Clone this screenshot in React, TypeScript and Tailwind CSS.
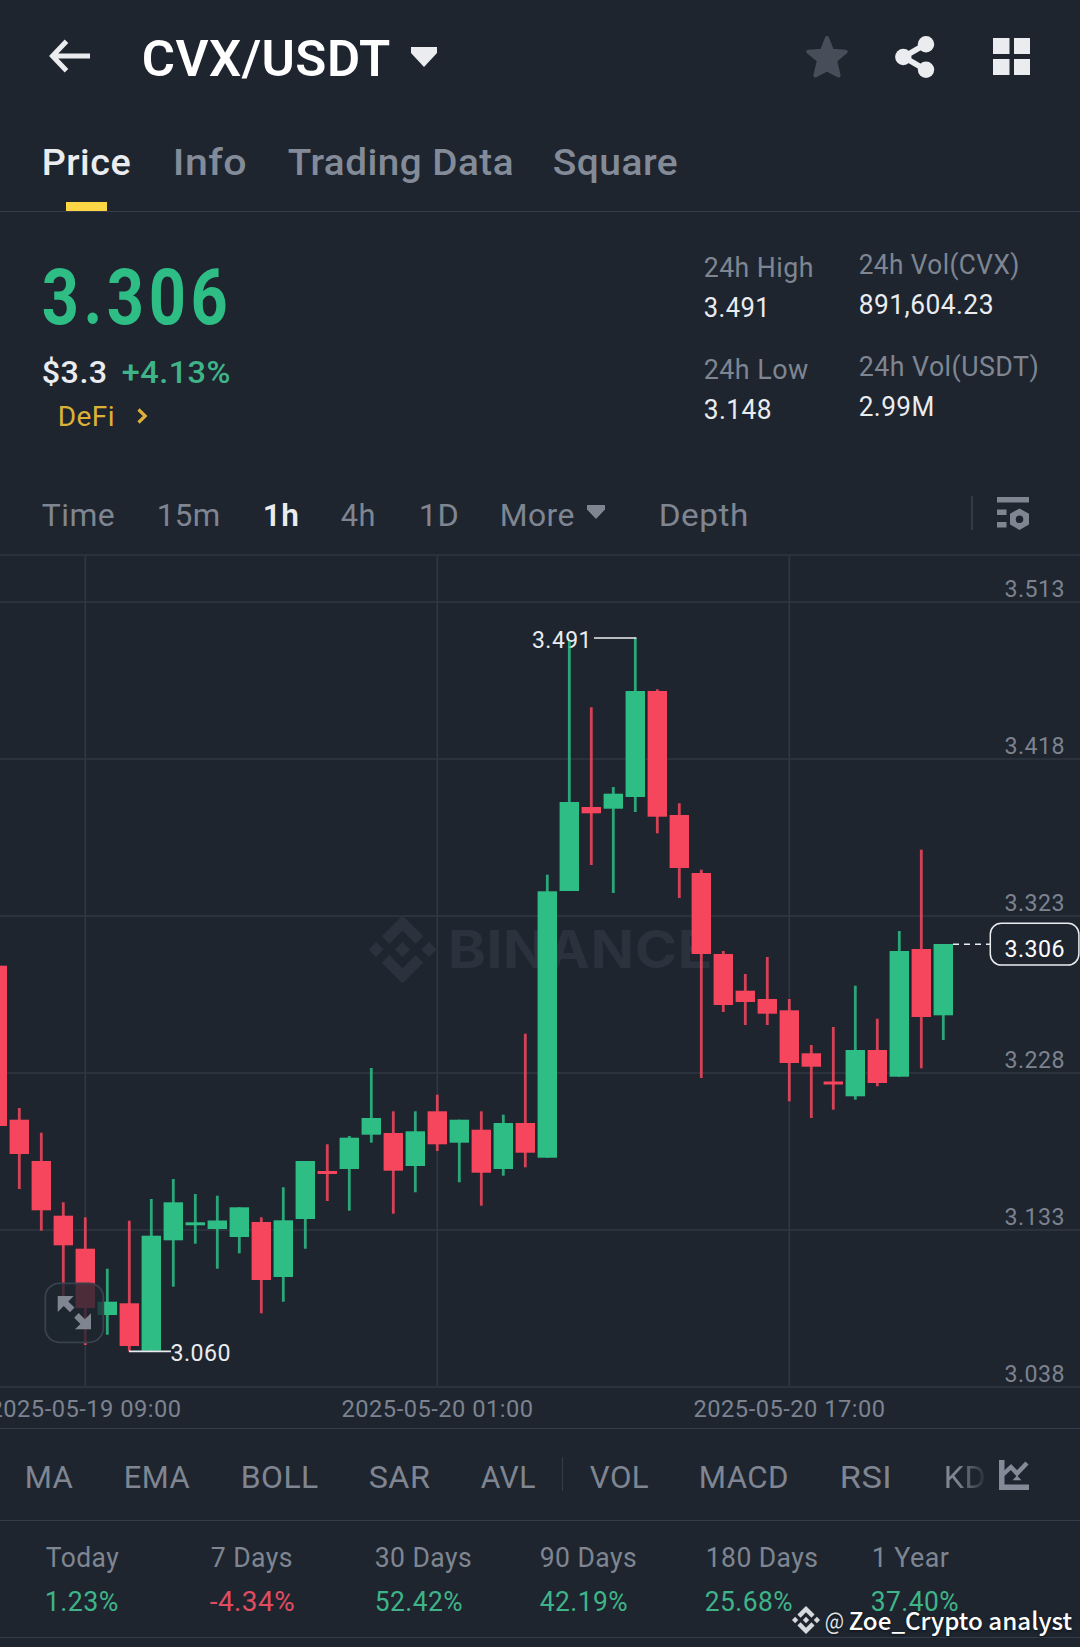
import { useLayoutEffect, useRef, type ReactNode } from "react";

/* Text whose glyphs are condensed or widened to fill the width of its box. */
function Fit({ className = "", children }: { className?: string; children: ReactNode }) {
  const box = useRef<HTMLDivElement>(null);
  const text = useRef<HTMLSpanElement>(null);
  useLayoutEffect(() => {
    if (box.current && text.current) {
      const ratio = (box.current.clientWidth - 1.4) / text.current.offsetWidth;
      text.current.style.transform = `translateX(0.7px) scaleX(${ratio})`;
    }
  });
  return (
    <div ref={box} className={`flex shrink-0 items-center whitespace-nowrap ${className}`}>
      <span ref={text} className="inline-block shrink-0 origin-left">
        {children}
      </span>
    </div>
  );
}

type Candle = [up: 0 | 1, high: number, top: number, bottom: number, low: number];

const candles: Candle[] = [
  [0, 965.7, 965.7, 1126, 1126],
  [0, 1108, 1119.7, 1154, 1189],
  [0, 1132.7, 1161, 1210.3, 1230.7],
  [0, 1202.3, 1215.7, 1245.3, 1296],
  [0, 1217.3, 1248.7, 1308, 1345],
  [1, 1268.7, 1301.7, 1315, 1334.7],
  [0, 1220.7, 1303.3, 1346, 1351.3],
  [1, 1199, 1235.7, 1350.7, 1350.7],
  [1, 1179, 1202.3, 1240.3, 1286.7],
  [1, 1194, 1222.3, 1225.3, 1243.7],
  [1, 1195.7, 1220.5, 1229, 1268.7],
  [1, 1207.3, 1207.3, 1237, 1253.3],
  [0, 1217.3, 1222, 1280, 1313.3],
  [1, 1187.3, 1220.3, 1277, 1301.7],
  [1, 1161, 1161, 1219, 1248.7],
  [0, 1144.3, 1171, 1174, 1201],
  [1, 1136, 1137.7, 1169, 1210.7],
  [1, 1068, 1118, 1134.7, 1142.7],
  [0, 1111.3, 1133, 1170.7, 1213.7],
  [1, 1111.3, 1131.3, 1166, 1192.3],
  [0, 1094.7, 1111.3, 1144.3, 1151],
  [1, 1119.7, 1119.7, 1142.7, 1182.3],
  [0, 1111.3, 1129.7, 1172.7, 1205.7],
  [1, 1114.7, 1123, 1169, 1175.7],
  [0, 1033.7, 1123, 1152.7, 1167.3],
  [1, 874.7, 891.3, 1157.7, 1157.7],
  [1, 641, 802, 891, 891],
  [0, 707.3, 807, 813.3, 865],
  [1, 787, 793.7, 808.7, 893],
  [1, 638, 691, 797, 812],
  [0, 689.3, 691, 816.7, 833.3],
  [0, 803.3, 815, 868, 898],
  [0, 869.7, 873, 954, 1078],
  [0, 951, 954, 1005, 1012],
  [0, 974, 990.7, 1002, 1025],
  [0, 957, 999, 1013.7, 1025],
  [0, 999, 1010.3, 1063, 1101.3],
  [0, 1045, 1053.3, 1066.7, 1118],
  [0, 1027, 1081.5, 1084.5, 1109.7],
  [1, 985.7, 1050, 1096.3, 1099.7],
  [0, 1018.7, 1050, 1083, 1086.3],
  [1, 931, 951, 1076.7, 1076.7],
  [0, 849.7, 949, 1017, 1068.3],
  [1, 944, 944, 1015.3, 1040],
];

const priceLevels = ["3.513", "3.418", "3.323", "3.228", "3.133", "3.038"];
const dates = ["2025-05-19 09:00", "2025-05-20 01:00", "2025-05-20 17:00"];

function BinanceMark({ className = "" }: { className?: string }) {
  return (
    <svg viewBox="0 0 68 68" className={className} fill="currentColor">
      <path d="M34 0 54.8 20.8 47.2 28.4 34 15.2 20.8 28.4 13.2 20.8Z" />
      <path d="M34 68 54.8 47.2 47.2 39.6 34 52.8 20.8 39.6 13.2 47.2Z" />
      <path d="M34 26.4 41.6 34 34 41.6 26.4 34Z" />
      <path d="M7.6 26.4 15.2 34 7.6 41.6 0 34Z" />
      <path d="M60.4 26.4 68 34 60.4 41.6 52.8 34Z" />
    </svg>
  );
}

function Chart() {
  return (
    <svg
      viewBox="0 556 1080 872"
      className="block h-[872px] w-[1080px] font-['Roboto',sans-serif] text-[24px]"
    >
      <g stroke="#303742" strokeWidth="1.6">
        {priceLevels.map((p, i) => (
          <line key={p} x1="0" x2="1080" y1={602 + i * 157} y2={602 + i * 157} />
        ))}
        {dates.map((d, i) => (
          <line key={d} x1={85.3 + i * 352} x2={85.3 + i * 352} y1="556" y2="1387" />
        ))}
      </g>
      <svg x="368.5" y="915" width="68" height="69" viewBox="0 0 68 68" className="text-[#2b323d]">
        <BinanceMark />
      </svg>
      <text
        x="448"
        y="968"
        textLength="265"
        lengthAdjust="spacingAndGlyphs"
        fill="#2b323d"
        className="font-['Inter',sans-serif] text-[52px] font-bold"
      >
        BINANCE
      </text>
      <g fill="#eaecef">
        <text x="532" y="647.7" textLength="60" lengthAdjust="spacingAndGlyphs">3.491</text>
        <text x="170.5" y="1360.7" textLength="60.5" lengthAdjust="spacingAndGlyphs">3.060</text>
      </g>
      {candles.map(([up, high, top, bottom, low], i) => {
        const x = -2.7 + i * 22;
        return (
          <g key={i} fill={up ? "#2ebd85" : "#f6465d"}>
            <rect x={x - 1.4} y={high} width="2.8" height={low - high} opacity="0.85" />
            <rect x={x - 9.7} y={top} width="19.4" height={bottom - top} />
          </g>
        );
      })}
      <path d="M594 638h42.5M129 1351.4h42" stroke="#eaecef" strokeWidth="1.6" />
      <path d="M953 944.2h37" stroke="#eaecef" strokeWidth="1.6" strokeDasharray="6 5" />
      <g fill="#7c838f">
        {priceLevels.map((p, i) => (
          <text key={p} x="1004.5" y={596.7 + i * 157} textLength="60.5" lengthAdjust="spacingAndGlyphs">
            {p}
          </text>
        ))}
        {dates.map((d, i) => (
          <text key={d} x={-10.5 + i * 352} y="1416.7" textLength="192" lengthAdjust="spacingAndGlyphs">
            {d}
          </text>
        ))}
      </g>
      <rect x="990.3" y="923.3" width="88.6" height="41.8" rx="11" fill="#1e252f" stroke="#eaecef" strokeWidth="1.5" />
      <text x="1004.5" y="956.7" textLength="60.5" lengthAdjust="spacingAndGlyphs" fill="#ffffff">
        3.306
      </text>
      <rect x="45.3" y="1283.3" width="58" height="59" rx="14" fill="#1e252f" fillOpacity="0.78" stroke="#39414c" strokeWidth="1.8" />
      <g fill="#7f8691">
        <path d="M57.7 1296H73.7L68.3 1301.4 74.5 1307.6 70 1312.2 63.8 1306 57.7 1312Z" />
        <path d="M91 1329.3H75L80.4 1323.9 74.2 1317.7 78.7 1313.1 84.9 1319.3 91 1313.2Z" />
      </g>
    </svg>
  );
}

function Header() {
  return (
    <header className="flex h-[114px] items-center text-[#eaecef]">
      <svg viewBox="0 0 42 34" className="mb-[2px] ml-[49px] h-[34px] w-[42px]" fill="none" stroke="currentColor" strokeWidth="5">
        <path d="M41 17H4M17.5 2.2 3.5 17l14 14.8" />
      </svg>
      <Fit className="ml-[49.5px] w-[251px] pt-[6px] text-[49.5px] leading-none font-semibold text-white">
        CVX/USDT
      </Fit>
      <svg viewBox="0 0 26 20" className="ml-[19.5px] h-[20px] w-[26px]" fill="currentColor">
        <path d="M0 0h26v6L13 20 0 6Z" />
      </svg>
      <svg viewBox="0 0 42 42" className="mb-[1px] ml-[368.5px] h-[42px] w-[42px] text-[#474e5a]" fill="currentColor" stroke="currentColor" strokeWidth="4" strokeLinejoin="round">
        <path d="m21 2 5 12.8 13.7.9-10.6 8.7L32.6 39.5 21 33.4 9.4 39.5l3.5-15.1L2.3 15.7l13.7-.9Z" />
      </svg>
      <svg viewBox="0 0 40 42" className="mb-[1px] ml-[47.5px] h-[42px] w-[40px]" fill="currentColor">
        <path d="M31 8 8.5 21 31 34" fill="none" stroke="currentColor" strokeWidth="5.5" />
        <circle cx="31" cy="8.3" r="8.2" />
        <circle cx="8.3" cy="21" r="8.2" />
        <circle cx="31" cy="33.7" r="8.2" />
      </svg>
      <svg viewBox="0 0 37 37" className="mb-[1px] ml-[58px] h-[37px] w-[37px]" fill="currentColor">
        <path d="M0 0h16.5v16H0zM21 0h16v16H21zM0 21h16.5v16H0zM21 21h16v16H21z" />
      </svg>
    </header>
  );
}

function Tabs() {
  return (
    <nav className="flex h-[98px] items-stretch border-b border-[#353c47] text-[37.5px] leading-none font-medium text-[#848b98]">
      <div className="relative ml-[40.5px] flex">
        <Fit className="w-[91px] text-[#eaecef]">Price</Fit>
        <span className="absolute bottom-0 left-[25.5px] h-[9px] w-[41px] bg-[#fcd645]" />
      </div>
      <Fit className="ml-[40.5px] w-[76px]">Info</Fit>
      <Fit className="ml-[38.5px] w-[228px]">Trading Data</Fit>
      <Fit className="ml-[37.5px] w-[127px]">Square</Fit>
    </nav>
  );
}

function Summary() {
  return (
    <section className="flex h-[264px]">
      <div className="w-[703px] pt-[46px]">
        <Fit className="ml-[40.5px] h-[80px] w-[191.5px] text-[78px] leading-none font-bold tracking-[0.07em] text-[#2ebd85]">
          3.306
        </Fit>
        <div className="mt-[18px] flex h-[32px] items-center text-[32px] leading-none font-medium">
          <Fit className="ml-[40.5px] w-[67px] text-[#eaecef]">$3.3</Fit>
          <Fit className="ml-[13.5px] w-[111px] text-[#3fb488]">+4.13%</Fit>
        </div>
        <div className="mt-[15px] flex h-[28px] items-center text-[27.7px] leading-none text-[#dcb137]">
          <Fit className="ml-[57px] w-[58.5px]">DeFi</Fit>
          <svg viewBox="0 0 12 16" className="mb-[2px] ml-[21.5px] h-[16px] w-[12px]" fill="none" stroke="currentColor" strokeWidth="3.2">
            <path d="m1.5 1.5 6.7 6.5-6.7 6.5" />
          </svg>
        </div>
      </div>
      <div className="w-[154.5px] pt-[36px] text-[28px] leading-[40px]">
        <Fit className="w-[112px] text-[#7f8692]">24h High</Fit>
        <Fit className="w-[68px] text-[#eaecef]">3.491</Fit>
        <Fit className="mt-[22px] w-[106px] text-[#7f8692]">24h Low</Fit>
        <Fit className="w-[70px] text-[#eaecef]">3.148</Fit>
      </div>
      <div className="pt-[33px] text-[28px] leading-[40px]">
        <Fit className="w-[163px] text-[#7f8692]">24h Vol(CVX)</Fit>
        <Fit className="w-[137px] text-[#eaecef]">891,604.23</Fit>
        <Fit className="mt-[22px] w-[182px] text-[#7f8692]">24h Vol(USDT)</Fit>
        <Fit className="w-[76.5px] text-[#eaecef]">2.99M</Fit>
      </div>
    </section>
  );
}

function Timeframes() {
  return (
    <nav className="flex h-[80px] items-center border-b-2 border-[#2a313c] text-[32px] leading-none text-[#7f8692]">
      <Fit className="ml-[40.5px] w-[75px]">Time</Fit>
      <Fit className="ml-[40.5px] w-[65px]">15m</Fit>
      <Fit className="ml-[41px] w-[37.5px] font-semibold text-[#eaecef]">1h</Fit>
      <Fit className="ml-[40.5px] w-[37px]">4h</Fit>
      <Fit className="ml-[40.5px] w-[41.5px]">1D</Fit>
      <Fit className="ml-[39.5px] w-[76.5px]">More</Fit>
      <svg viewBox="0 0 18 14" className="mb-[7px] ml-[11.5px] h-[14px] w-[18px]" fill="currentColor">
        <path d="M0 0h18v4.5L9 14 0 4.5Z" />
      </svg>
      <Fit className="ml-[53.5px] w-[90.5px]">Depth</Fit>
      <span className="mb-[4px] ml-[222.5px] h-[34px] w-[2px] bg-[#343b46]" />
      <svg viewBox="0 0 32 33" className="mb-[4px] ml-[23.5px] h-[33px] w-[32px]" fill="currentColor">
        <path d="M0 0h32v5.5H0zM0 12.5h9.5V18H0zM0 25h9.5v5.5H0z" />
        <path fillRule="evenodd" d="m22.5 11.5 9.5 5.3v10.6L22.5 33 13 27.4V16.8ZM22.5 18.5a3.8 3.8 0 1 0 0 7.6 3.8 3.8 0 0 0 0-7.6Z" />
      </svg>
    </nav>
  );
}

function Indicators() {
  return (
    <nav className="flex h-[92px] items-center border-b border-[#353c47] pt-[4px] text-[32px] leading-none text-[#7f8692]">
      <Fit className="ml-[24px] w-[49.5px]">MA</Fit>
      <Fit className="ml-[49px] w-[67.5px]">EMA</Fit>
      <Fit className="ml-[50px] w-[79px]">BOLL</Fit>
      <Fit className="ml-[49px] w-[62.5px]">SAR</Fit>
      <Fit className="ml-[49.5px] w-[56.5px]">AVL</Fit>
      <span className="mb-[6px] ml-[25.5px] h-[34px] w-px bg-[#353c47]" />
      <Fit className="ml-[26px] w-[60.5px]">VOL</Fit>
      <Fit className="ml-[48px] w-[92px]">MACD</Fit>
      <Fit className="ml-[49px] w-[53.5px]">RSI</Fit>
      <div className="ml-[50.5px] w-[48px] overflow-hidden mask-r-from-30% mask-r-to-95%">
        <Fit className="w-[62px]">KDJ</Fit>
      </div>
      <svg viewBox="0 0 30 30" className="mb-[3px] ml-[8px] h-[30px] w-[30px] text-[#848b98]" fill="currentColor">
        <path d="M0 0h5.5v24.5H30V30H0z" />
        <path d="M4 14.5 12 7l6 6.500L28 3" fill="none" stroke="currentColor" strokeWidth="4.4" />
        <path d="m18 15.5 4.5 4.7h-9Z" />
      </svg>
    </nav>
  );
}

function Periods() {
  return (
    <section className="h-[117px] border-b border-[#353c47] pt-[17px] text-[28px] leading-[40px]">
      <div className="flex text-[#7f8692]">
        <Fit className="ml-[44.5px] w-[75px]">Today</Fit>
        <Fit className="ml-[90.5px] w-[83.5px]">7 Days</Fit>
        <Fit className="ml-[80.5px] w-[98.5px]">30 Days</Fit>
        <Fit className="ml-[66px] w-[98.5px]">90 Days</Fit>
        <Fit className="ml-[67.5px] w-[113.5px]">180 Days</Fit>
        <Fit className="ml-[52.5px] w-[79px]">1 Year</Fit>
      </div>
      <div className="mt-[4px] flex text-[#3fb488]">
        <Fit className="ml-[43.5px] w-[75.5px]">1.23%</Fit>
        <Fit className="ml-[89.5px] w-[86.5px] text-[#e04c60]">-4.34%</Fit>
        <Fit className="ml-[79px] w-[90px]">52.42%</Fit>
        <Fit className="ml-[75px] w-[90px]">42.19%</Fit>
        <Fit className="ml-[75px] w-[90px]">25.68%</Fit>
        <Fit className="ml-[76px] w-[90px]">37.40%</Fit>
      </div>
    </section>
  );
}

export default function App() {
  return (
    <main className="relative h-[1647px] w-[1080px] overflow-hidden bg-[#1e252f] font-['Roboto',sans-serif] tracking-[0.03em]">
      <Header />
      <Tabs />
      <Summary />
      <Timeframes />
      <div className="h-[873px] overflow-hidden border-b border-[#353c47]">
        <Chart />
      </div>
      <Indicators />
      <Periods />
      <div className="absolute right-[7px] bottom-[9px] flex h-[36px] items-center font-['Noto_Sans_CJK_SC',sans-serif] text-[24px] leading-none tracking-normal text-white [text-shadow:0_1px_3px_rgba(0,0,0,0.6)]">
        <BinanceMark className="h-[28px] w-[28px] text-[#d5d8dc]" />
        <Fit className="ml-[4px] w-[21px] text-[#dfe1e4]">@</Fit>
        <Fit className="ml-[3px] w-[225px] font-medium">Zoe_Crypto analyst</Fit>
      </div>
    </main>
  );
}
